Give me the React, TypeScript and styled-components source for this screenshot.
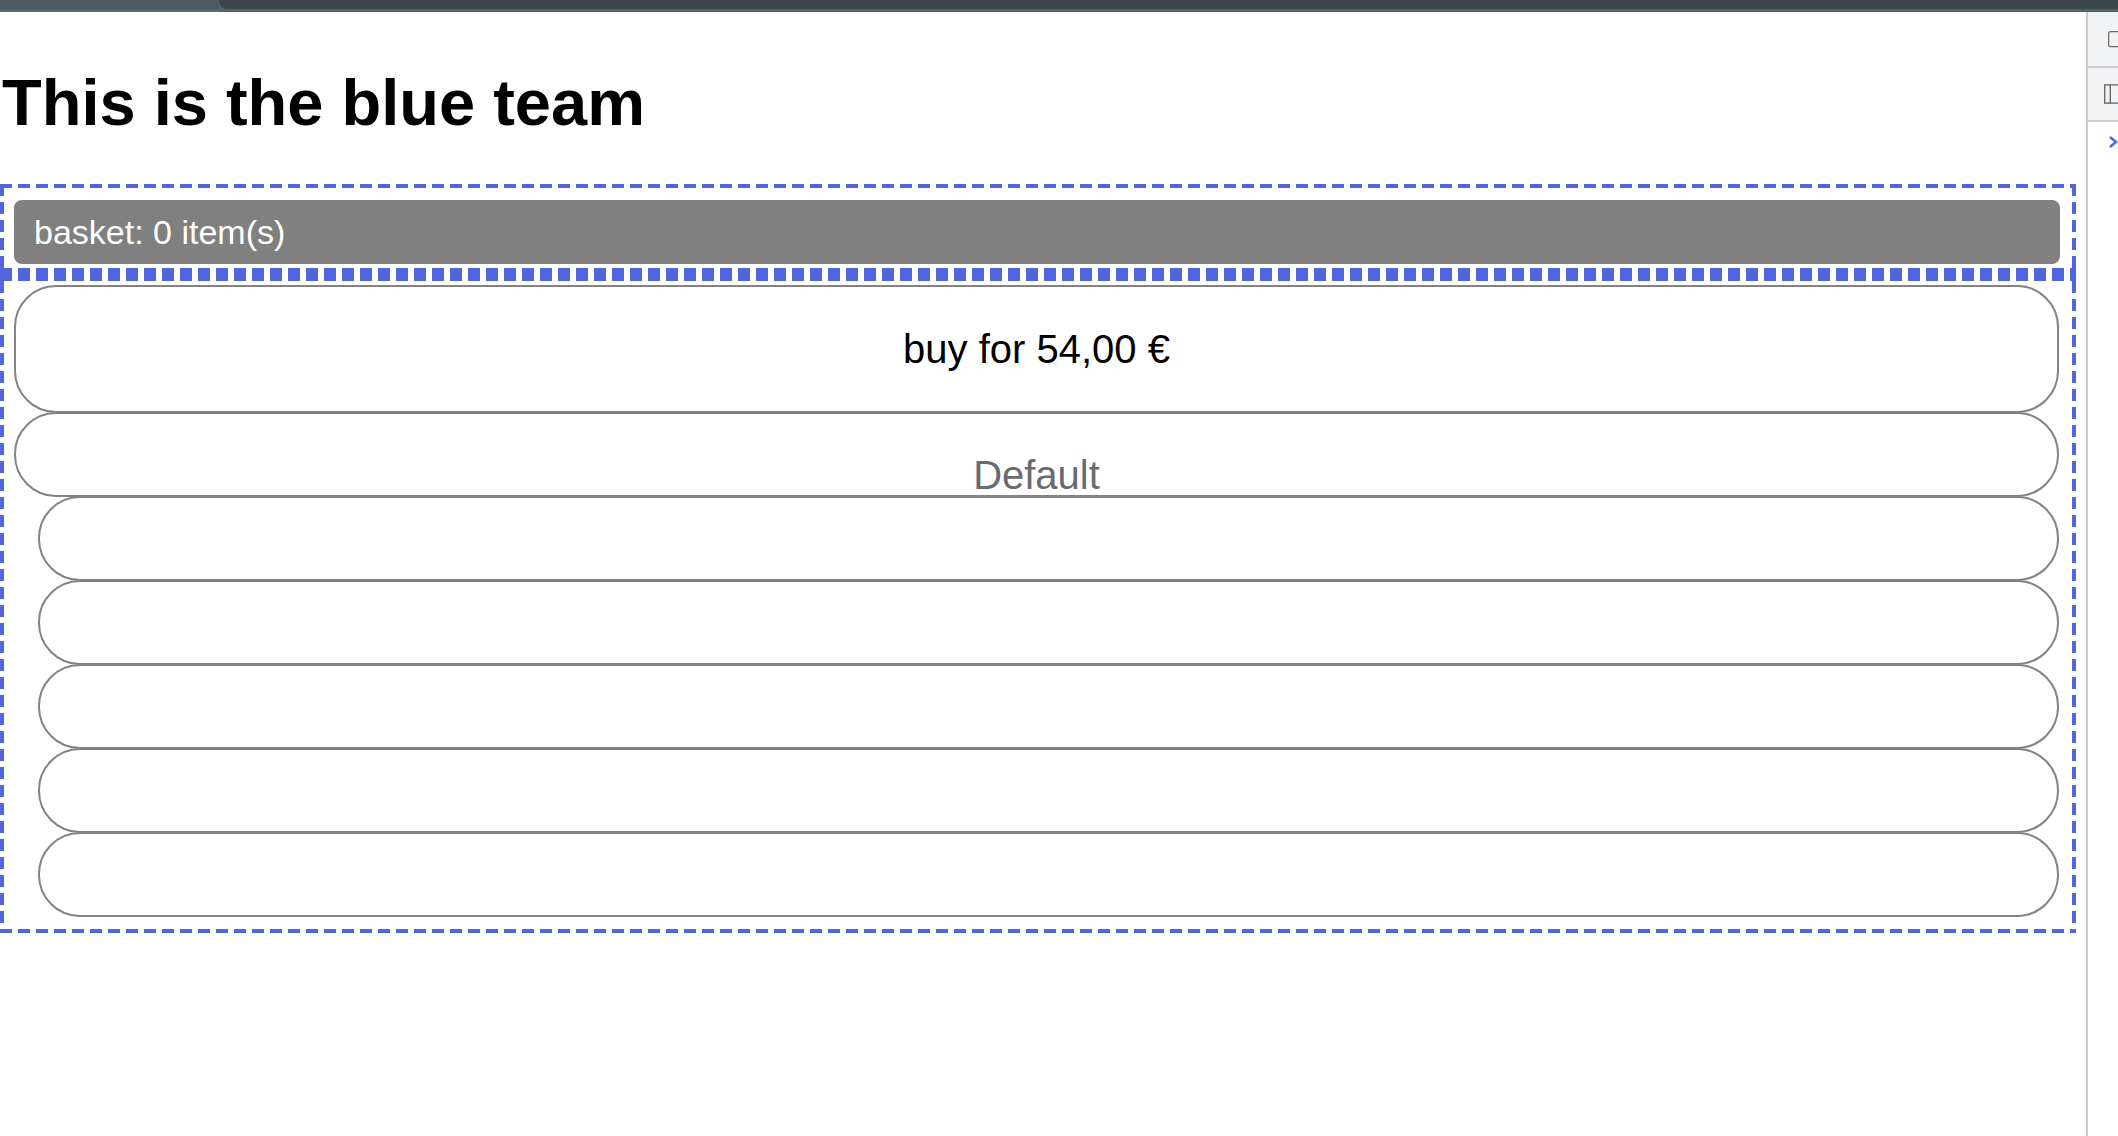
import styled, { css, createGlobalStyle } from 'styled-components'

const blue = '#5166de'
const pillBorder = '#838383'

const GlobalStyle = createGlobalStyle`
  html, body {
    margin: 0;
    padding: 0;
    background: #ffffff;
  }
  body {
    font-family: 'Liberation Sans', Arial, sans-serif;
  }
`

// dashed edges drawn as gradients so the dash length matches the original
const hDash = `repeating-linear-gradient(90deg, ${blue} 0 12px, transparent 12px 18px)`
const vDash = `repeating-linear-gradient(180deg, ${blue} 0 12px, transparent 12px 18px)`

const dashedFrame = (top: boolean, bottom: boolean) => css`
  background:
    ${top ? `${hDash} left top / 100% 4px no-repeat,` : ''}
    ${bottom ? `${hDash} left bottom / 100% 4px no-repeat,` : ''}
    ${vDash} left top / 4px 100% no-repeat,
    ${vDash} right top / 4px 100% no-repeat,
    #ffffff;
`

const Window = styled.div`
  display: flex;
  flex-direction: column;
  height: 100vh;
  overflow: hidden;
`

const TopStrip = styled.div`
  height: 12px;
  flex-shrink: 0;
  display: flex;
  background: #56636b;
`

const StripLeft = styled.div`
  width: 219px;
  border-bottom: 2px solid #5f6c74;
  background: #4e5a62;
`

const StripTab = styled.div`
  flex: 1;
  height: 9px;
  background: #3b454c;
  border-bottom-left-radius: 8px;
`

const Main = styled.div`
  flex: 1;
  display: flex;
  min-height: 0;
`

const Content = styled.main`
  flex: 1;
  padding-right: 10px;
`

const Title = styled.h1`
  margin: 54px 0 44px;
  padding-left: 2px;
  font-size: 65px;
  line-height: 74px;
  font-weight: 700;
  color: #000000;
`

const TeamBox = styled.section`
  ${dashedFrame(true, false)}
  padding: 16px 16px 4px 14px;
`

const BasketBar = styled.div`
  display: flex;
  align-items: center;
  height: 64px;
  padding-left: 20px;
  border-radius: 8px;
  background: #808080;
  color: #ffffff;
  font-size: 34px;
`

const DashDivider = styled.div`
  height: 13px;
  background: ${hDash};
`

const BuyBox = styled.section`
  ${dashedFrame(false, true)}
  padding: 4px 17px 16px 14px;
  display: flex;
  flex-direction: column;
`

const Pill = styled.div<{ $tall?: boolean; $indent?: boolean; $muted?: boolean }>`
  box-sizing: border-box;
  height: ${(p) => (p.$tall ? '128px' : '85px')};
  margin-top: ${(p) => (p.$tall ? '0' : '-1px')};
  margin-left: ${(p) => (p.$indent ? '24px' : '0')};
  border: 2px solid ${pillBorder};
  border-radius: 42px;
  background: #ffffff;
  display: flex;
  justify-content: center;
  align-items: ${(p) => (p.$muted ? 'flex-start' : 'center')};
  padding-top: ${(p) => (p.$muted ? '41px' : '0')};
  font-size: 40px;
  line-height: 40px;
  color: ${(p) => (p.$muted ? '#6a6a6e' : '#000000')};
`

const SidePanel = styled.aside`
  width: 30px;
  flex-shrink: 0;
  border-left: 2px solid #cbcbcf;
  overflow: hidden;
  display: flex;
  flex-direction: column;
`

const PanelTab = styled.div<{ $h: number; $pad: number }>`
  height: ${(p) => p.$h}px;
  border-bottom: 2px solid #cdcdd1;
  background: #f1f2f4;
  display: flex;
  align-items: center;
  padding-left: ${(p) => p.$pad}px;
`

const PanelChevron = styled.div`
  padding: 13px 0 0 20px;
`

const rows = [0, 1, 2, 3, 4]

export default function App() {
  return (
    <>
      <GlobalStyle />
      <Window>
        <TopStrip>
          <StripLeft />
          <StripTab />
        </TopStrip>
        <Main>
          <Content>
            <Title>This is the blue team</Title>
            <TeamBox>
              <BasketBar>basket: 0 item(s)</BasketBar>
            </TeamBox>
            <DashDivider />
            <BuyBox>
              <Pill $tall>buy for 54,00 €</Pill>
              <Pill $muted>Default</Pill>
              {rows.map((r) => (
                <Pill key={r} $indent />
              ))}
            </BuyBox>
          </Content>
          <SidePanel>
            <PanelTab $h={54} $pad={20}>
              <svg width="16" height="26" viewBox="0 0 16 26">
                <rect x="1" y="1" width="18" height="24" rx="3" fill="none" stroke="#6b6b6b" strokeWidth="2" />
              </svg>
            </PanelTab>
            <PanelTab $h={52} $pad={16}>
              <svg width="20" height="28" viewBox="0 0 20 28">
                <rect x="1" y="1" width="22" height="26" fill="none" stroke="#6b6b6b" strokeWidth="2" />
                <line x1="9" y1="1" x2="9" y2="27" stroke="#6b6b6b" strokeWidth="2" />
              </svg>
            </PanelTab>
            <PanelChevron>
              <svg width="10" height="14" viewBox="0 0 10 14">
                <path d="M2 2 L8 7 L2 12" fill="none" stroke="#4a6ee0" strokeWidth="2.6" />
              </svg>
            </PanelChevron>
          </SidePanel>
        </Main>
      </Window>
    </>
  )
}
